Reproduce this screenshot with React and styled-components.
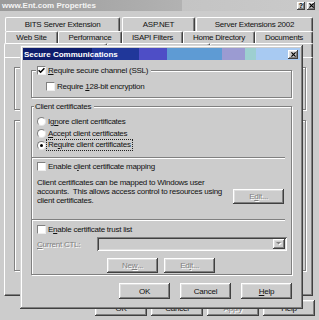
import React from "react";
import styled, { createGlobalStyle } from "styled-components";

const FACE = "#cccccc";
const SHADOW = "#808080";
const DARK = "#404040";

const raised = `box-shadow: inset -1px -1px ${DARK}, inset 1px 1px #fff, inset -2px -2px ${SHADOW}, inset 2px 2px #dedede;`;
const sunken = `box-shadow: inset 1px 1px ${SHADOW}, inset -1px -1px #fff, inset 2px 2px ${DARK}, inset -2px -2px #dedede;`;

const inactiveGrad =
  "linear-gradient(90deg, #9a9a9a 0%, #b2b2b2 57%, #c4c4c4 57%, #cacaca 100%)";
const activeGrad =
  "linear-gradient(90deg, #0e1d6c 0%, #0e1d6c 25%, #20379a 25%, #20379a 42%, #4e4ec6 42%, #4e4ec6 52%, #5e9bd4 52%, #5e9bd4 72%, #9b9bd2 72%, #9b9bd2 80%, #9dcfd0 80%, #9dcfd0 84%, #a8caf2 84%, #a8caf2 100%)";

const GlobalStyle = createGlobalStyle`
  html, body { margin: 0; padding: 0; background: ${FACE}; }
  body {
    font-family: "Liberation Sans", Arial, sans-serif;
    font-size: 8px;
    letter-spacing: -0.25px;
    color: #111;
  }
`;

const Desktop = styled.div`
  position: relative;
  width: 319px;
  height: 320px;
  overflow: hidden;
  background: ${FACE};
`;

const PropsWindow = styled.div`
  display: flex;
  flex-direction: column;
  height: 100%;
`;

const Caption = styled.div`
  flex: none;
  display: flex;
  align-items: center;
  justify-content: space-between;
  height: ${p => p.$h}px;
  padding: ${p => p.$pad};
  background: ${p => p.$bg};
  color: ${p => p.$color};
  font-weight: bold;
  letter-spacing: 0;
  white-space: nowrap;
`;

const CaptionButtons = styled.div`
  display: flex;
  gap: 2px;
`;

const CaptionButton = styled.div`
  box-sizing: border-box;
  width: ${p => p.$w}px;
  height: ${p => p.$h}px;
  display: flex;
  align-items: center;
  justify-content: center;
  background: ${FACE};
  ${raised}
  color: #000;
  font-size: 7px;
  font-weight: bold;
  line-height: 1;
`;

const TabStrip = styled.div`
  flex: none;
  padding: 6px 6px 0 5px;
`;

const TabRow = styled.div`
  display: flex;
  height: ${p => p.$h}px;
  margin-left: ${p => p.$shift || 0}px;
`;

const Tab = styled.div`
  box-sizing: border-box;
  width: ${p => p.$w}px;
  margin-right: ${p => p.$gap || 0}px;
  display: flex;
  align-items: center;
  justify-content: center;
  white-space: nowrap;
  border-top: 1px solid #fff;
  border-left: 1px solid #fff;
  border-right: 1px solid ${DARK};
  border-radius: 2px 2px 0 0;
  box-shadow: inset -1px 0 ${SHADOW};
  background: ${FACE};
`;

const Panel = styled.div`
  flex: none;
  box-sizing: border-box;
  height: 239px;
  margin: 0 6px 0 4px;
  padding: 9px 6px 0 9px;
  border-top: 1px solid #fff;
  border-left: 1px solid #fff;
  border-right: 1px solid ${DARK};
  border-bottom: 1px solid ${DARK};
  box-shadow: inset -1px -1px ${SHADOW};
  display: flex;
  flex-direction: column;
  gap: 10px;
`;

const BgGroup = styled.div`
  box-sizing: border-box;
  height: ${p => p.$h}px;
  border: 1px solid ${SHADOW};
  box-shadow: 1px 1px 0 #fff, inset 1px 1px 0 #fff;
`;

const ButtonBar = styled.div`
  display: flex;
  justify-content: ${p => p.$justify || "flex-end"};
  gap: ${p => p.$gap}px;
  margin-top: ${p => p.$mt}px;
  padding-right: ${p => p.$pr || 0}px;
  padding-left: ${p => p.$pl || 0}px;
`;

const Button = styled.div`
  box-sizing: border-box;
  flex: none;
  width: ${p => p.$w || 51}px;
  height: ${p => p.$h || 15}px;
  margin-right: ${p => p.$mr || 0}px;
  margin-bottom: ${p => p.$mb || 0}px;
  display: flex;
  align-items: center;
  justify-content: center;
  background: ${FACE};
  ${raised}
  white-space: nowrap;
  color: ${p => (p.$disabled ? SHADOW : "#111")};
  text-shadow: ${p => (p.$disabled ? "1px 1px #fff" : "none")};
`;

const Dialog = styled.div`
  position: absolute;
  left: 20px;
  top: 45px;
  width: 283px;
  height: 264px;
  box-sizing: border-box;
  padding: 3px;
  background: ${FACE};
  box-shadow: inset -1px -1px ${DARK}, inset 1px 1px #d6d6d6, inset -2px -2px ${SHADOW}, inset 2px 2px #fff;
  display: flex;
  flex-direction: column;
`;

const Body = styled.div`
  display: flex;
  flex-direction: column;
  padding: 0 8px;
`;

const Group = styled.fieldset`
  margin: ${p => p.$mt}px 0 0;
  padding: 0 4px ${p => p.$pb}px 5px;
  min-width: 0;
  border: 1px solid ${SHADOW};
  box-shadow: 1px 1px 0 #fff, inset 1px 1px 0 #fff;
`;

const Legend = styled.legend`
  padding: 0 3px 0 1px;
  margin-left: ${p => p.$ml}px;
  background: ${FACE};
`;

const Row = styled.div`
  display: flex;
  align-items: center;
  gap: 2px;
  height: ${p => p.$h || 11}px;
  margin-top: ${p => p.$mt || 0}px;
  padding-left: ${p => p.$indent || 0}px;
`;

const Label = styled.span`
  white-space: nowrap;
  color: ${p => (p.$disabled ? SHADOW : "inherit")};
  text-shadow: ${p => (p.$disabled ? "1px 1px #fff" : "none")};
  ${p =>
    p.$focus &&
    `outline: 1px dotted #222; outline-offset: 0; padding: 0 1px; margin-left: -1px; line-height: 10px;`}
`;

const CheckBox = styled.span`
  box-sizing: border-box;
  flex: none;
  width: 9px;
  height: 9px;
  display: inline-flex;
  align-items: center;
  justify-content: center;
  background: #fff;
  border: 1px solid ${SHADOW};
  border-right-color: #eeeeee;
  border-bottom-color: #eeeeee;
`;

const RadioDot = styled.span`
  box-sizing: border-box;
  flex: none;
  width: 9px;
  height: 9px;
  border-radius: 50%;
  display: inline-flex;
  align-items: center;
  justify-content: center;
  background: #fff;
  border: 1px solid ${SHADOW};
  border-right-color: #e4e4e4;
  border-bottom-color: #e4e4e4;
  &::after {
    content: "";
    width: 3px;
    height: 3px;
    border-radius: 50%;
    background: ${p => (p.$on ? "#000" : "transparent")};
  }
`;

const Separator = styled.div`
  height: 0;
  margin: ${p => p.$mt}px 2px 0 -5px;
  border-top: 1px solid ${SHADOW};
  border-bottom: 1px solid #fff;
`;

const MapRow = styled.div`
  display: flex;
  align-items: flex-end;
  justify-content: space-between;
  margin-top: 6px;
`;

const Note = styled.div`
  line-height: 9px;
  white-space: nowrap;
`;

const Combo = styled.div`
  box-sizing: border-box;
  width: 190px;
  height: 14px;
  margin-left: auto;
  padding: 2px;
  display: flex;
  justify-content: flex-end;
  background: ${FACE};
  ${sunken}
`;

const ComboArrow = styled.div`
  box-sizing: border-box;
  width: 12px;
  height: 10px;
  display: flex;
  align-items: center;
  justify-content: center;
  background: ${FACE};
  ${raised}
`;

const Check = ({ on }) => (
  <CheckBox>
    {on && (
      <svg width="7" height="7" viewBox="0 0 7 7">
        <path d="M0.6 3.2 L2.6 5.2 L6.4 1.2" fill="none" stroke="#000" strokeWidth="1.5" />
      </svg>
    )}
  </CheckBox>
);

const CloseGlyph = ({ size }) => (
  <svg width={size} height={size} viewBox="0 0 6 6">
    <path d="M0.5 0.5 L5.5 5.5 M5.5 0.5 L0.5 5.5" stroke="#000" strokeWidth="1.4" />
  </svg>
);

export default function App() {
  return (
    <>
      <GlobalStyle />
      <Desktop>
        <PropsWindow>
          <Caption $h={11} $pad="0 4px 0 2px" $bg={inactiveGrad} $color="#f4f4f4">
            <span>www.Ent.com Properties</span>
            <CaptionButtons>
              <CaptionButton $w={8} $h={8}>?</CaptionButton>
              <CaptionButton $w={8} $h={8}>
                <CloseGlyph size={5} />
              </CaptionButton>
            </CaptionButtons>
          </Caption>

          <TabStrip>
            <TabRow $h={14}>
              <Tab $w={115} $gap={2}>BITS Server Extension</Tab>
              <Tab $w={73} $gap={1}>ASP.NET</Tab>
              <Tab $w={117}>Server Extensions 2002</Tab>
            </TabRow>
            <TabRow $h={12}>
              <Tab $w={53}>Web Site</Tab>
              <Tab $w={64}>Performance</Tab>
              <Tab $w={61}>ISAPI Filters</Tab>
              <Tab $w={72}>Home Directory</Tab>
              <Tab $w={58}>Documents</Tab>
            </TabRow>
            {/* front row of tabs, covered by the dialog */}
            <TabRow $h={14} $shift={-1}>
              <Tab $w={103} />
              <Tab $w={103} />
              <Tab $w={103} />
            </TabRow>
          </TabStrip>

          <Panel>
            <BgGroup $h={43} />
            <BgGroup $h={151} />
          </Panel>

          <ButtonBar $gap={4} $mt={4} $pr={4}>
            <Button $w={52} $h={16}>OK</Button>
            <Button $w={52} $h={16}>Cancel</Button>
            <Button $w={52} $h={16} $disabled>Apply</Button>
            <Button $w={52} $h={16}>Help</Button>
          </ButtonBar>
        </PropsWindow>

        <Dialog>
          <Caption $h={12} $pad="0 2px 0 1px" $bg={activeGrad} $color="#fff">
            <span>Secure Communications</span>
            <CaptionButton $w={10} $h={9}>
              <CloseGlyph size={5} />
            </CaptionButton>
          </Caption>

          <Body>
            <Group $mt={5} $pb={5}>
              <Legend $ml={-1}>
                <Row>
                  <Check on />
                  <Label>
                    <u>R</u>equire secure channel (SSL)
                  </Label>
                </Row>
              </Legend>
              <Row $mt={5} $indent={9}>
                <Check />
                <Label>
                  Require <u>1</u>28-bit encryption
                </Label>
              </Row>
            </Group>

            <Group $mt={3} $pb={1}>
              <Legend $ml={-3}>
                <Row>
                  <Label>Client certificates</Label>
                </Row>
              </Legend>
              <Row $h={12} $mt={3}>
                <RadioDot />
                <Label>
                  Ig<u>n</u>ore client certificates
                </Label>
              </Row>
              <Row $h={12}>
                <RadioDot />
                <Label>
                  <u>A</u>ccept client certificates
                </Label>
              </Row>
              <Row $h={12}>
                <RadioDot $on />
                <Label $focus>
                  Re<u>q</u>uire client certificates
                </Label>
              </Row>

              <Separator $mt={6} />
              <Row $mt={2}>
                <Check />
                <Label>
                  Enable c<u>l</u>ient certificate mapping
                </Label>
              </Row>
              <MapRow>
                <Note>
                  Client certificates can be mapped to Windows user
                  <br />
                  accounts.&nbsp; This allows access control to resources using
                  <br />
                  client certificates.
                </Note>
                <Button $disabled $mr={3} $mb={1}>
                  E<u>d</u>it...
                </Button>
              </MapRow>

              <Separator $mt={14} />
              <Row $mt={3}>
                <Check />
                <Label>
                  E<u>n</u>able certificate trust list
                </Label>
              </Row>
              <Row $h={14} $mt={2}>
                <Label $disabled>
                  <u>C</u>urrent CTL:
                </Label>
                <Combo>
                  <ComboArrow>
                    <svg width="6" height="4" viewBox="0 0 6 4">
                      <path d="M1 1 L6 1 L3.5 3.5 Z" fill="#fff" />
                      <path d="M0 0 L5 0 L2.5 2.5 Z" fill={SHADOW} />
                    </svg>
                  </ComboArrow>
                </Combo>
              </Row>
              <ButtonBar $gap={6} $mt={7} $justify="flex-start" $pl={70}>
                <Button $disabled>
                  Ne<u>w</u>...
                </Button>
                <Button $disabled>
                  Ed<u>i</u>t...
                </Button>
              </ButtonBar>
            </Group>

            <ButtonBar $gap={10} $mt={8}>
              <Button $h={16}>OK</Button>
              <Button $h={16}>Cancel</Button>
              <Button $h={16}>
                <u>H</u>elp
              </Button>
            </ButtonBar>
          </Body>
        </Dialog>
      </Desktop>
    </>
  );
}
